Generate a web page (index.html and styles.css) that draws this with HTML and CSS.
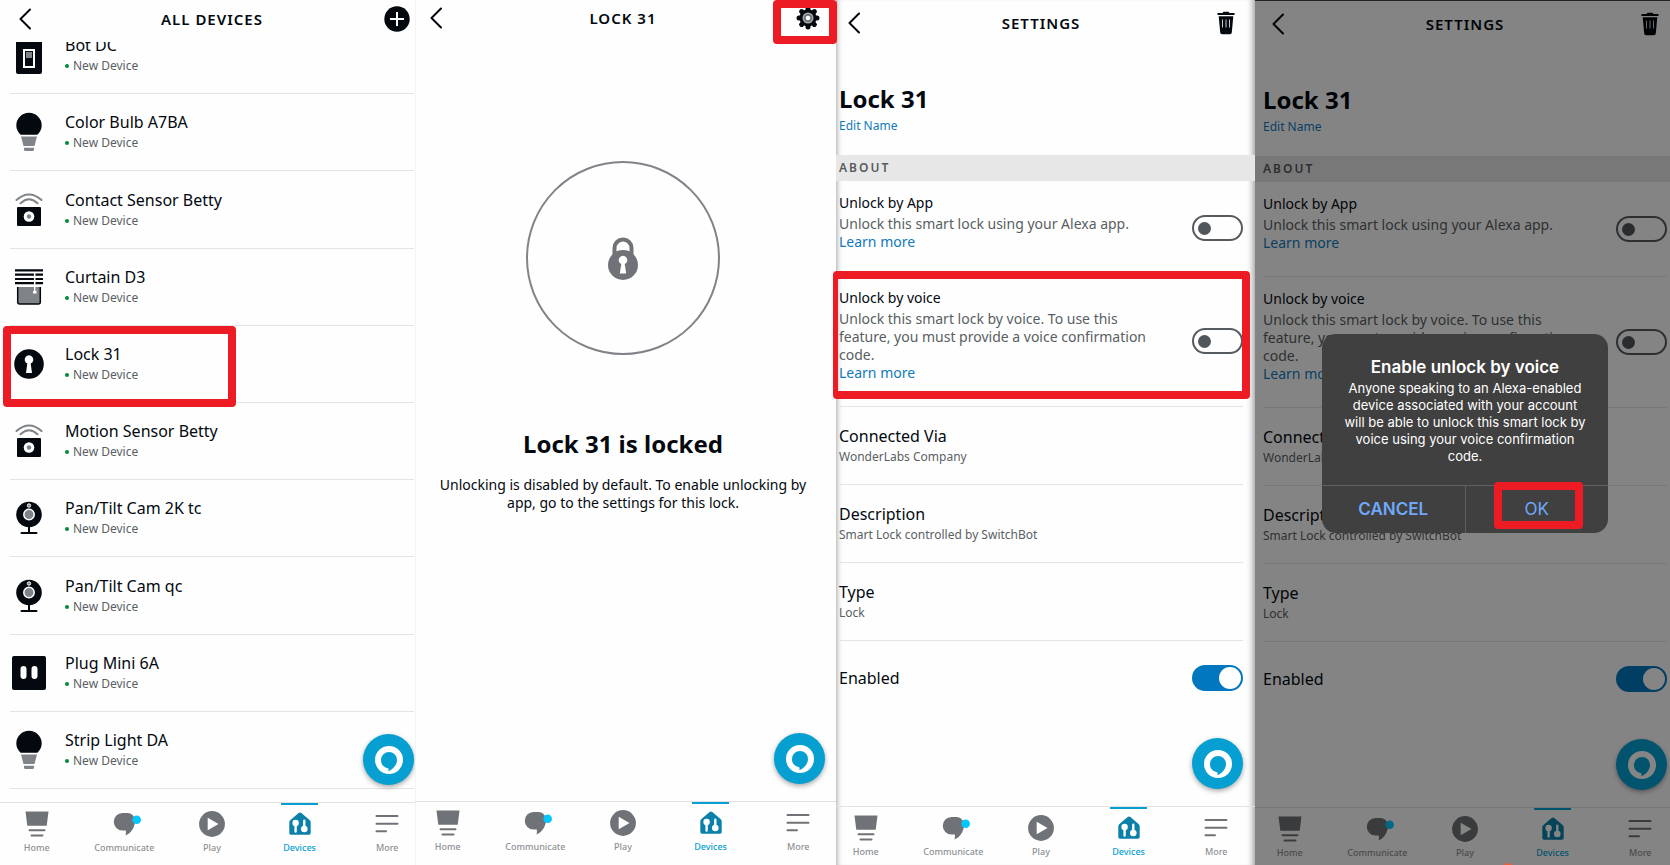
FILE: index.html
```html
<!DOCTYPE html>
<html lang="en">
	<head>
		<meta charset="utf-8">
		<title>Enable unlock by voice</title>
		<meta name="viewport" content="width=device-width, initial-scale=1.0">
		<link rel="stylesheet" href="styles.css">
	</head>
	<body>
		<svg class="sprite" aria-hidden="true">
			<symbol id="back" viewBox="0 0 12 22">
				<path d="M11 1.500 1.500 11 11 20.500" fill="none" stroke="currentColor" stroke-width="2" stroke-linecap="round" stroke-linejoin="round"/>
			</symbol>
			<symbol id="plus" viewBox="0 0 26 26">
				<circle cx="13" cy="13" r="12.700" fill="currentColor"/>
				<path d="M13 6v14M6 13h14" stroke="#fff" stroke-width="2"/>
			</symbol>
			<symbol id="gear" viewBox="0 0 24 24">
				<g stroke="currentColor" stroke-width="5" stroke-linecap="round">
					<path d="M12 3v18M3 12h18M5.600 5.600l12.800 12.800M18.400 5.600 5.600 18.400"/>
				</g>
				<circle cx="12" cy="12" r="8.500" fill="currentColor"/>
				<circle cx="12" cy="12" r="5.500" fill="#a6a8aa"/>
				<circle cx="12" cy="12" r="4" fill="#6f7276"/>
				<circle cx="12" cy="12" r="2.300" fill="#fff"/>
			</symbol>
			<symbol id="trash" viewBox="0 0 18 24">
				<path d="M5.500 2 6.500.8h5L12.500 2h5v2H.5V2zM1.700 5.300h14.600l-1.500 16.200q-.2 1.700-1.800 1.700H5q-1.600 0-1.800-1.700z" fill="currentColor"/>
				<path d="M5.500 8.500v8M9 8.500v8M12.500 8.500v8" stroke="#c8c9ca" stroke-width="1"/>
			</symbol>
			<symbol id="switch" viewBox="0 0 34 40">
				<rect x="4" y="1" width="26" height="38" rx="2" fill="currentColor"/>
				<rect x="12" y="15" width="10" height="17" fill="currentColor" stroke="#fff" stroke-width="2"/>
				<path d="M14 17h6v6h-6z" fill="#808387"/>
			</symbol>
			<symbol id="bulb" viewBox="0 0 34 40">
				<path d="M8.600 22.800C6 20 4.300 17.500 4.300 13.500a12.700 12.700 0 0 1 25.400 0c0 4-1.700 6.500-4.300 9.300z" fill="currentColor"/>
				<path d="M9 24.500h16l-2.500 9.500h-11zM12 35.800h10v1.700q0 1.500-1.500 1.500h-7q-1.500 0-1.500-1.500z" fill="#808387"/>
			</symbol>
			<symbol id="sensor" viewBox="0 0 34 40">
				<path d="M4.500 10q12.500-11 25 0M8.500 13.200q8.500-8 17 0" fill="none" stroke="#808387" stroke-width="2" stroke-linecap="round"/>
				<rect x="5" y="17" width="24" height="19" rx="1" fill="currentColor"/>
				<circle cx="17" cy="26.500" r="5.300" fill="#fff"/>
				<circle cx="17" cy="26.500" r="2.200" fill="#808387"/>
			</symbol>
			<symbol id="curtain" viewBox="0 0 34 40">
				<path d="M5.700 19h22.600v16q0 2-2 2h-18.600q-2 0-2-2z" fill="#808387" stroke="currentColor" stroke-width="1.500"/>
				<path d="M3 17.500h28v2.500H3z" fill="#fff"/>
				<path d="M3 3.300h28M3 7.600h28M3 12h28M3 16.200h28" stroke="currentColor" stroke-width="2.200"/>
				<path d="M22.700 6v19" stroke="#fff" stroke-width="1.500"/>
				<path d="M21 24h3.500v2.500H21z" fill="#fff"/>
			</symbol>
			<symbol id="lock" viewBox="0 0 34 40">
				<circle cx="17" cy="20" r="14.800" fill="currentColor"/>
				<path d="M15.300 19.500a4.300 4.300 0 1 1 3.400 0l1.300 9.500h-6z" fill="#fff"/>
			</symbol>
			<symbol id="camera" viewBox="0 0 34 40">
				<circle cx="17" cy="16.500" r="12.800" fill="currentColor"/>
				<path d="M17 28v7M9.500 35h15" stroke="currentColor" stroke-width="2" stroke-linecap="round"/>
				<circle cx="17" cy="16.500" r="5.200" fill="#808387" stroke="#fff" stroke-width="1.500"/>
				<circle cx="17" cy="7.500" r="1.700" fill="#808387" stroke="#fff" stroke-width="1"/>
			</symbol>
			<symbol id="plug" viewBox="0 0 34 40">
				<rect y="3" width="34" height="34" rx="2" fill="currentColor"/>
				<rect x="8.500" y="13" width="6" height="13" rx="3" fill="#fff"/>
				<rect x="19.500" y="13" width="6" height="13" rx="3" fill="#fff"/>
			</symbol>
			<symbol id="padlock" viewBox="0 0 30 43">
				<path d="M6.500 20v-9a8.500 8.500 0 0 1 17 0v9" fill="none" stroke="#6f7276" stroke-width="4"/>
				<circle cx="15" cy="28" r="15" fill="#6f7276"/>
				<path d="M13.300 27a4.300 4.300 0 1 1 3.400 0l1.500 9.500h-6.400z" fill="#fff"/>
			</symbol>
			<symbol id="alexa" viewBox="0 0 28 28">
				<path fill-rule="evenodd" d="M14 0a14 14 0 1 1 0 28 14 14 0 0 1 0-28zm0 6a8 8 0 0 0-8 8c0 5.500 3.500 7.200 7 8.300.4.100.5.300.5.700v2.200C18.500 23 22 18.500 22 14a8 8 0 0 0-8-8z" fill="#fff"/>
			</symbol>
			<symbol id="home" viewBox="0 0 28 26">
				<path d="M2.500.5h23l-1.800 14.300H4.300z" fill="currentColor"/>
				<path d="M6.500 19.200h15M8.500 24.500h11" stroke="currentColor" stroke-width="2" stroke-linecap="round"/>
			</symbol>
			<symbol id="communicate" viewBox="0 0 28 26">
				<path d="M12.500 2h5C22 2 25.500 6 25 11c-.5 6-4.500 11.500-9.500 13.500.5-2 .5-3.500.3-5H12.500a8.700 8.700 0 0 1 0-17.500z" fill="currentColor"/>
				<circle cx="26.700" cy="8.700" r="4.300" fill="#00c7ff"/>
			</symbol>
			<symbol id="play" viewBox="0 0 28 26">
				<circle cx="14" cy="13" r="12.900" fill="currentColor"/>
				<path d="M9.700 6.800v12.400L20.500 13z" fill="#fff"/>
			</symbol>
			<symbol id="devices" viewBox="0 0 28 26">
				<path d="M12.600 2q1.400-1.200 2.800 0l8.400 7.200q.9.800.9 2V22q0 1.700-1.700 1.700H5Q3.300 23.700 3.300 22V11.200q0-1.200.9-2z" fill="#0b80a9"/>
				<path d="M9.600 12v8.500M18.300 9.700v8" stroke="#fff" stroke-width="2.400" stroke-linecap="round"/>
				<circle cx="9.600" cy="12" r="3.200" fill="#fff"/>
				<circle cx="18.300" cy="18" r="3.300" fill="#fff"/>
			</symbol>
			<symbol id="more" viewBox="0 0 28 26">
				<path d="M3.500 5h21M3.500 12.700h21M3.500 20.200h9.500" stroke="currentColor" stroke-width="2" stroke-linecap="round"/>
			</symbol>
		</svg>

		<main class="screens">
			<!-- all devices -->
			<section class="screen screen-list">
				<header class="topbar">
					<button class="icon-btn back" aria-label="Back"><svg width="12" height="22"><use href="#back"/></svg></button>
					<h1>ALL DEVICES</h1>
					<button class="icon-btn" aria-label="Add device"><svg width="26" height="26"><use href="#plus"/></svg></button>
				</header>
				<div class="list-clip">
					<ul class="devices">
						<li><svg><use href="#switch"/></svg><div><h2>Bot DC</h2><p class="status">New Device</p></div></li>
						<li><svg><use href="#bulb"/></svg><div><h2>Color Bulb A7BA</h2><p class="status">New Device</p></div></li>
						<li><svg><use href="#sensor"/></svg><div><h2>Contact Sensor Betty</h2><p class="status">New Device</p></div></li>
						<li><svg><use href="#curtain"/></svg><div><h2>Curtain D3</h2><p class="status">New Device</p></div></li>
						<li class="picked"><svg><use href="#lock"/></svg><div><h2>Lock 31</h2><p class="status">New Device</p></div></li>
						<li><svg><use href="#sensor"/></svg><div><h2>Motion Sensor Betty</h2><p class="status">New Device</p></div></li>
						<li><svg><use href="#camera"/></svg><div><h2>Pan/Tilt Cam 2K tc</h2><p class="status">New Device</p></div></li>
						<li><svg><use href="#camera"/></svg><div><h2>Pan/Tilt Cam qc</h2><p class="status">New Device</p></div></li>
						<li><svg><use href="#plug"/></svg><div><h2>Plug Mini 6A</h2><p class="status">New Device</p></div></li>
						<li><svg><use href="#bulb"/></svg><div><h2>Strip Light DA</h2><p class="status">New Device</p></div></li>
					</ul>
				</div>
				<footer class="bottom">
					<button class="alexa" aria-label="Alexa"><svg width="28" height="28"><use href="#alexa"/></svg></button>
					<nav class="tabs">
						<ul>
							<li><a href="#"><svg><use href="#home"/></svg>Home</a></li>
							<li><a href="#"><svg><use href="#communicate"/></svg>Communicate</a></li>
							<li><a href="#"><svg><use href="#play"/></svg>Play</a></li>
							<li><a href="#" class="active"><svg><use href="#devices"/></svg>Devices</a></li>
							<li><a href="#"><svg><use href="#more"/></svg>More</a></li>
						</ul>
					</nav>
				</footer>
			</section>

			<!-- lock state -->
			<section class="screen screen-lock">
				<header class="topbar">
					<button class="icon-btn back" aria-label="Back"><svg width="12" height="22"><use href="#back"/></svg></button>
					<h1>LOCK 31</h1>
					<button class="icon-btn picked" aria-label="Lock settings"><svg width="24" height="24"><use href="#gear"/></svg></button>
				</header>
				<div class="lock-state">
					<div class="dial"><svg width="30" height="43"><use href="#padlock"/></svg></div>
					<h2 class="big">Lock 31 is locked</h2>
					<p>Unlocking is disabled by default. To enable unlocking by app, go to the settings for this lock.</p>
				</div>
				<footer class="bottom">
					<button class="alexa" aria-label="Alexa"><svg width="28" height="28"><use href="#alexa"/></svg></button>
					<nav class="tabs">
						<ul>
							<li><a href="#"><svg><use href="#home"/></svg>Home</a></li>
							<li><a href="#"><svg><use href="#communicate"/></svg>Communicate</a></li>
							<li><a href="#"><svg><use href="#play"/></svg>Play</a></li>
							<li><a href="#" class="active"><svg><use href="#devices"/></svg>Devices</a></li>
							<li><a href="#"><svg><use href="#more"/></svg>More</a></li>
						</ul>
					</nav>
				</footer>
			</section>

			<!-- lock settings -->
			<section class="screen screen-settings">
				<header class="topbar">
					<button class="icon-btn back" aria-label="Back"><svg width="12" height="22"><use href="#back"/></svg></button>
					<h1>SETTINGS</h1>
					<button class="icon-btn" aria-label="Delete"><svg width="18" height="24"><use href="#trash"/></svg></button>
				</header>
				<div class="hero">
					<h2 class="big">Lock 31</h2>
					<a href="#">Edit Name</a>
				</div>
				<h3 class="section-title">ABOUT</h3>
				<div class="settings">
					<div class="setting">
						<div>
							<label for="by-app">Unlock by App</label>
							<p>Unlock this smart lock using your Alexa app.</p>
							<a href="#">Learn more</a>
						</div>
						<input type="checkbox" class="toggle" id="by-app">
					</div>
					<div class="setting picked">
						<div>
							<label for="by-voice">Unlock by voice</label>
							<p>Unlock this smart lock by voice. To use this feature, you must provide a voice confirmation code.</p>
							<a href="#">Learn more</a>
						</div>
						<input type="checkbox" class="toggle" id="by-voice">
					</div>
					<div class="info"><div><h4>Connected Via</h4><p>WonderLabs Company</p></div></div>
					<div class="info"><div><h4>Description</h4><p>Smart Lock controlled by SwitchBot</p></div></div>
					<div class="info"><div><h4>Type</h4><p>Lock</p></div></div>
					<div class="info">
						<label for="enabled">Enabled</label>
						<input type="checkbox" class="toggle" id="enabled" checked>
					</div>
				</div>
				<footer class="bottom">
					<button class="alexa" aria-label="Alexa"><svg width="28" height="28"><use href="#alexa"/></svg></button>
					<nav class="tabs">
						<ul>
							<li><a href="#"><svg><use href="#home"/></svg>Home</a></li>
							<li><a href="#"><svg><use href="#communicate"/></svg>Communicate</a></li>
							<li><a href="#"><svg><use href="#play"/></svg>Play</a></li>
							<li><a href="#" class="active"><svg><use href="#devices"/></svg>Devices</a></li>
							<li><a href="#"><svg><use href="#more"/></svg>More</a></li>
						</ul>
					</nav>
				</footer>
			</section>

			<!-- lock settings, confirmation open -->
			<section class="screen screen-confirm">
				<header class="topbar">
					<button class="icon-btn back" aria-label="Back"><svg width="12" height="22"><use href="#back"/></svg></button>
					<h1>SETTINGS</h1>
					<button class="icon-btn" aria-label="Delete"><svg width="18" height="24"><use href="#trash"/></svg></button>
				</header>
				<div class="hero">
					<h2 class="big">Lock 31</h2>
					<a href="#">Edit Name</a>
				</div>
				<h3 class="section-title">ABOUT</h3>
				<div class="settings">
					<div class="setting">
						<div>
							<label for="by-app-2">Unlock by App</label>
							<p>Unlock this smart lock using your Alexa app.</p>
							<a href="#">Learn more</a>
						</div>
						<input type="checkbox" class="toggle" id="by-app-2">
					</div>
					<div class="setting">
						<div>
							<label for="by-voice-2">Unlock by voice</label>
							<p>Unlock this smart lock by voice. To use this feature, you must provide a voice confirmation code.</p>
							<a href="#">Learn more</a>
						</div>
						<input type="checkbox" class="toggle" id="by-voice-2">
					</div>
					<div class="info"><div><h4>Connected Via</h4><p>WonderLabs Company</p></div></div>
					<div class="info"><div><h4>Description</h4><p>Smart Lock controlled by SwitchBot</p></div></div>
					<div class="info"><div><h4>Type</h4><p>Lock</p></div></div>
					<div class="info">
						<label for="enabled-2">Enabled</label>
						<input type="checkbox" class="toggle" id="enabled-2" checked>
					</div>
				</div>
				<footer class="bottom">
					<button class="alexa" aria-label="Alexa"><svg width="28" height="28"><use href="#alexa"/></svg></button>
					<nav class="tabs">
						<ul>
							<li><a href="#"><svg><use href="#home"/></svg>Home</a></li>
							<li><a href="#"><svg><use href="#communicate"/></svg>Communicate</a></li>
							<li><a href="#"><svg><use href="#play"/></svg>Play</a></li>
							<li><a href="#" class="active"><svg><use href="#devices"/></svg>Devices</a></li>
							<li><a href="#"><svg><use href="#more"/></svg>More</a></li>
						</ul>
					</nav>
				</footer>
				<div class="overlay">
					<div class="dialog" role="dialog" aria-labelledby="dialog-title">
						<h2 id="dialog-title">Enable unlock by voice</h2>
						<p>Anyone speaking to an Alexa-enabled device associated with your account will be able to unlock this smart lock by voice using your voice confirmation code.</p>
						<div class="dialog-actions">
							<button class="cancel">CANCEL</button>
							<button class="ok picked">OK</button>
						</div>
					</div>
				</div>
			</section>
		</main>
	</body>
</html>
```

FILE: styles.css
```css
*, *::before, *::after {
	box-sizing: border-box;
}
* {
	margin: 0;
	padding: 0;
}
body {
	font-family: "Noto Sans", "Open Sans", sans-serif;
	color: #03090f;
	background-color: #FFF;
}
ul {
	list-style: none;
}
a {
	color: #117abb;
	text-decoration: none;
}
button {
	border: 0;
	background: none;
	color: inherit;
	font: inherit;
}
svg {
	display: block;
	flex: none;
}
.sprite {
	position: absolute;
	width: 0;
	height: 0;
}

/* screens */
.screens {
	display: grid;
	grid-template-columns: 415fr 421fr 419fr 415fr;
	min-height: 100vh;
}
.screen {
	--left: 3px;
	--right: 12px;
	position: relative;
	display: flex;
	flex-direction: column;
	min-width: 0;
	background-color: #FEFEFE;
}
.screen-list {
	--left: 10px;
	--right: 1px;
	padding: 1px 0 5px;
}
.screen-lock {
	--left: 6px;
	--right: 11px;
	padding-bottom: 6px;
	box-shadow: inset 1px 0 #f4f4f4;
}
.screen-settings {
	padding: 5px 0 1px;
	box-shadow: inset 6px 0 6px -6px #888, inset -8px 0 6px -6px #999;
}
.screen-confirm {
	--left: 8px;
	--right: 3px;
	padding-top: 5px;
	border-top: 1px solid #222;
}

/* red frame round the thing to tap */
.picked {
	position: relative;
}
.picked::after {
	content: "";
	position: absolute;
	z-index: 2;
	border: 8px solid #ed1c24;
	border-radius: 4px;
	pointer-events: none;
}

/* top bar */
.topbar {
	display: grid;
	grid-template-columns: 34px 1fr 34px;
	align-items: center;
	height: 36px;
	padding: 0 var(--right) 0 var(--left);
}
.topbar h1 {
	font-size: 15px;
	font-weight: 600;
	letter-spacing: 1px;
	text-align: center;
}
.icon-btn {
	display: flex;
	align-items: center;
	justify-content: center;
	height: 36px;
}
.back {
	padding-right: 4px;
}
.icon-btn.picked::after {
	top: 0;
	right: -12px;
	width: 64px;
	height: 44px;
}

/* device list */
.list-clip {
	display: flex;
	flex: 1;
	flex-direction: column;
	margin-top: 5px;
	overflow: hidden;
}
.devices {
	display: flex;
	flex: 1;
	flex-direction: column;
	margin: -25px var(--right) 13px var(--left);
}
.devices li {
	display: flex;
	flex: 1;
	align-items: center;
	gap: 19px;
	padding-left: 2px;
	border-bottom: 1px solid #e4e4e4;
}
.devices svg {
	width: 34px;
	height: 40px;
}
.devices h2 {
	font-size: 16px;
	font-weight: 400;
	line-height: 22px;
}
.devices p {
	font-size: 12px;
	line-height: 20px;
	color: #5a5f63;
}
.status {
	display: flex;
	align-items: center;
	gap: 4px;
}
.status::before {
	content: "";
	width: 4px;
	height: 4px;
	border-radius: 50%;
	background-color: #008a3a;
}
.devices .picked::after {
	top: 0;
	bottom: -5px;
	left: -7px;
	width: 233px;
}

/* lock state */
.lock-state {
	display: flex;
	flex: 1;
	flex-direction: column;
	align-items: center;
	padding: 125px var(--right) 0 var(--left);
	text-align: center;
}
.dial {
	display: flex;
	align-items: center;
	justify-content: center;
	width: 194px;
	height: 194px;
	border: 2px solid #808488;
	border-radius: 50%;
}
.big {
	font-size: 24px;
	font-weight: 700;
	line-height: 32px;
}
.lock-state .big {
	margin-top: 73px;
}
.lock-state p {
	max-width: 390px;
	margin-top: 16px;
	font-size: 14px;
	line-height: 18px;
}

/* settings */
.hero {
	display: flex;
	flex-direction: column;
	align-items: flex-start;
	gap: 2px;
	padding: 42px var(--right) 20px var(--left);
}
.hero a {
	font-size: 12px;
	line-height: 18px;
}
.section-title {
	padding: 0 var(--right) 0 var(--left);
	font-size: 12px;
	font-weight: 600;
	line-height: 26px;
	letter-spacing: 2px;
	color: #565b5f;
	background-color: #e7e7e7;
}
.settings {
	flex: 1;
	padding: 0 var(--right) 0 var(--left);
}
.setting {
	display: flex;
	align-items: center;
	justify-content: space-between;
	gap: 12px;
	padding: 12px 0 24px;
	border-bottom: 1px solid #e4e4e4;
}
.setting > div {
	max-width: 330px;
	font-size: 14px;
	line-height: 18px;
}
.setting label {
	display: block;
	margin-bottom: 2px;
	line-height: 20px;
}
.setting p {
	color: #595e62;
}
.setting .toggle {
	margin-top: 12px;
}
.setting.picked::after {
	top: -5px;
	right: -7px;
	bottom: 7px;
	left: -6px;
	border-left-width: 5px;
}
.info {
	display: flex;
	align-items: center;
	justify-content: space-between;
	height: 78px;
	border-bottom: 1px solid #e4e4e4;
}
.info:last-child {
	height: 74px;
	border-bottom: 0;
}
.info h4, .info label {
	font-size: 16px;
	font-weight: 400;
	line-height: 22px;
}
.info p {
	font-size: 12px;
	line-height: 20px;
	color: #5a5f63;
}
.toggle {
	display: flex;
	flex: none;
	align-items: center;
	width: 51px;
	height: 26px;
	padding: 0 4px;
	border: 2px solid #565b60;
	border-radius: 13px;
	appearance: none;
}
.toggle::before {
	content: "";
	width: 13px;
	height: 13px;
	border-radius: 50%;
	background-color: #51565b;
}
.toggle:checked {
	justify-content: flex-end;
	padding: 0;
	border-color: #0077bf;
	background-color: #0077bf;
}
.toggle:checked::before {
	width: 22px;
	height: 22px;
	background-color: #FFF;
}

/* bottom tabs */
.bottom {
	position: relative;
}
.alexa {
	position: absolute;
	right: var(--right);
	bottom: calc(100% + 17px);
	display: flex;
	align-items: center;
	justify-content: center;
	width: 51px;
	height: 51px;
	border-radius: 50%;
	background-color: #05a0d1;
	box-shadow: 0 2px 5px rgba(0, 0, 0, .35);
}
.tabs {
	height: 58px;
	overflow: hidden;
	border-top: 1px solid #e2e2e2;
}
.tabs ul {
	display: flex;
	margin: -1px calc(var(--right) - 17px) 0 calc(var(--left) - 17px);
}
.tabs li {
	flex: 1;
}
.tabs a {
	position: relative;
	display: flex;
	flex-direction: column;
	align-items: center;
	gap: 4px;
	padding-top: 9px;
	font-size: 9px;
	font-weight: 500;
	line-height: 14px;
	color: #8e9194;
}
.tabs svg {
	width: 28px;
	height: 26px;
	color: #6f7276;
}
.tabs svg, #communicate {
	overflow: visible;
}
.tabs .active {
	color: #05a0d1;
}
.tabs .active::before {
	content: "";
	position: absolute;
	top: 0;
	width: 37px;
	height: 3px;
	background-color: #05a0d1;
}

/* confirmation */
.overlay {
	position: absolute;
	inset: 0;
	z-index: 3;
	display: flex;
	align-items: center;
	justify-content: center;
	padding: 0 var(--right) 0 var(--left);
	overflow: hidden;
	background-color: rgba(0, 0, 0, .48);
}
.overlay::after {
	content: "";
	position: absolute;
	bottom: -10px;
	left: 247px;
	width: 12px;
	height: 12px;
	border-radius: 50%;
	background-color: #e8603c;
}
.dialog {
	width: 286px;
	padding-top: 22px;
	border-radius: 14px;
	font-family: Inter, sans-serif;
	text-align: center;
	color: #FFF;
	background-color: #404040;
}
.dialog h2 {
	font-size: 17px;
	font-weight: 600;
	line-height: 22px;
}
.dialog p {
	padding: 2px 20px 20px;
	font-size: 13px;
	line-height: 17px;
}
.dialog-actions {
	display: flex;
	border-top: 1px solid #606060;
}
.dialog-actions button {
	flex: 1;
	height: 47px;
	font-size: 17px;
	color: #6fa8fa;
}
.dialog-actions .cancel {
	font-weight: 600;
	border-right: 1px solid #606060;
}
.dialog-actions .picked::after {
	top: -4px;
	left: 28px;
	width: 89px;
	height: 47px;
}
```
